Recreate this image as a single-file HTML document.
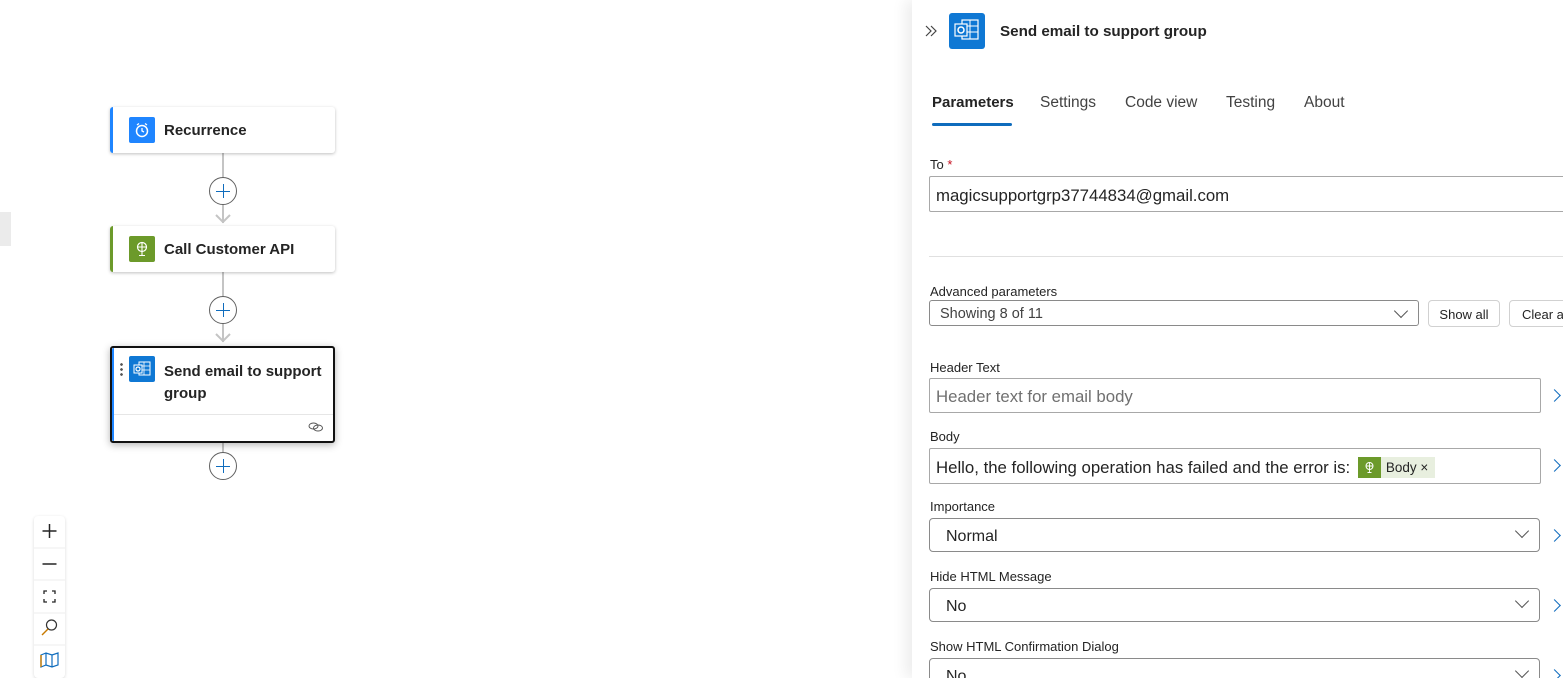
<!DOCTYPE html>
<html><head><style>
*{box-sizing:border-box;margin:0;padding:0}
html,body{width:1563px;height:678px;overflow:hidden}
body{background:#fff;font-family:"Segoe UI","Liberation Sans",sans-serif;color:#242424;position:relative}
.abs{position:absolute}
.card{position:absolute;left:110px;width:225px;background:#fff;border-radius:3px;box-shadow:0 1px 3px rgba(0,0,0,.25);}
.card .bar{position:absolute;left:0;top:0;bottom:0;width:3px;border-radius:3px 0 0 3px}
.ic{position:absolute;width:26px;height:26px;border-radius:2px}
.ct{position:absolute;left:54px;font-size:15px;font-weight:600;color:#242424}
.line{position:absolute;left:222px;width:2px;background:#c4c4c4}
.plus{position:absolute;left:209px;width:28px;height:28px;border:1px solid #616161;border-radius:50%;background:#fff}
.plus:before{content:"";position:absolute;left:6px;top:12.5px;width:14px;height:1.5px;background:#0f6cbd}
.plus:after{content:"";position:absolute;left:12.5px;top:6px;width:1.5px;height:14px;background:#0f6cbd}
.lbl{position:absolute;left:930px;font-size:13px;color:#242424}
.inp{position:absolute;left:929px;border:1px solid #a8a8a8;border-radius:2px;font-size:16.8px;color:#242424;padding-left:6px;padding-top:3px;display:flex;align-items:center;background:#fff}
.sel{position:absolute;left:929px;width:611px;height:34px;border:1px solid #8a8a8a;border-radius:4px;font-size:16px;padding-left:16px;padding-top:3px;display:flex;align-items:center}
.chev{position:absolute;right:12px;width:10px;height:10px;border-right:1.2px solid #555;border-bottom:1.2px solid #555;transform:rotate(45deg);top:7px}
.rch{position:absolute;left:1552px;width:9px;height:9px;border-right:1.6px solid #0f6cbd;border-top:1.6px solid #0f6cbd;transform:rotate(45deg)}
.tab{position:absolute;top:94px;font-size:15.5px;color:#424242}
</style></head><body>
<div class="abs" style="left:0;top:212px;width:11px;height:34px;background:#ebebeb"></div>

<div class="line" style="top:153px;height:70px"></div>
<div class="line" style="top:272px;height:70px"></div>
<div class="line" style="top:443px;height:10px"></div>
<svg class="abs" style="left:215px;top:213px" width="16" height="12"><path d="M1 2 L8 9 L15 2" fill="none" stroke="#c4c4c4" stroke-width="2"/></svg>
<svg class="abs" style="left:215px;top:332px" width="16" height="12"><path d="M1 2 L8 9 L15 2" fill="none" stroke="#c4c4c4" stroke-width="2"/></svg>
<div class="plus" style="top:177px"></div>
<div class="plus" style="top:296px"></div>
<div class="plus" style="top:452px"></div>

<div class="card" style="top:107px;height:46px"><div class="bar" style="background:#1f85ff"></div>
<div class="ic" style="left:19px;top:10px;background:#1f85ff"><svg width="26" height="26"><circle cx="13" cy="14" r="5.5" fill="none" stroke="#fff" stroke-width="1.5"/><path d="M13 11v3l2 1M8 8l2-1.5M18 8l-2-1.5" stroke="#fff" stroke-width="1.3" fill="none"/></svg></div>
<div class="ct" style="top:15px">Recurrence</div></div>

<div class="card" style="top:226px;height:46px"><div class="bar" style="background:#6c9a2a"></div>
<div class="ic" style="left:19px;top:10px;background:#6c9a2a"><svg width="26" height="26"><circle cx="13" cy="11" r="4.5" fill="none" stroke="#fff" stroke-width="1.2"/><path d="M13 6.5v9M8.5 11h9M13 15.5v4M10 19.5h6" stroke="#fff" stroke-width="1.1" fill="none"/></svg></div>
<div class="ct" style="top:15px">Call Customer API</div></div>

<div class="card" style="top:346px;height:97px;border:2px solid #111;box-shadow:0 2px 8px rgba(0,0,0,.3)"><div class="bar" style="background:#1f85ff;width:2px"></div>
<div class="abs" style="left:8px;top:14px;width:3px;height:14px;background:radial-gradient(circle,#555 1.2px,transparent 1.5px) 0 0/3px 5px"></div>
<div class="ic" style="left:17px;top:8px;background:#0f78d4"><svg width="26" height="26"><rect x="10" y="6" width="11" height="13" fill="none" stroke="#fff" stroke-width="1"/><path d="M10 10h11M10 14h11M15 6v13" stroke="#fff" stroke-width=".8"/><rect x="5" y="9" width="8" height="8" fill="#0f78d4" stroke="#fff" stroke-width="1"/><circle cx="9" cy="13" r="2" fill="none" stroke="#fff" stroke-width="1.2"/></svg></div>
<div class="ct" style="top:13px;left:52px;line-height:22px">Send email to support<br>group</div>
<div class="abs" style="left:2px;right:0;top:66px;height:1px;background:#e6e6e6"></div>
<svg class="abs" style="left:196px;top:73px" width="16" height="12"><ellipse cx="5.5" cy="5" rx="4.5" ry="3" fill="none" stroke="#555" stroke-width="1"/><ellipse cx="10" cy="7" rx="4.5" ry="3" fill="none" stroke="#555" stroke-width="1"/></svg>
</div>

<div class="abs" style="left:34px;top:516px;width:31px;height:162px;background:#fff;border-radius:4px;box-shadow:0 1px 3px rgba(0,0,0,.15)">
<svg width="31" height="162"><path d="M15.5 8v14M8.5 15h14" stroke="#242424" stroke-width="1.5"/><line x1="0" y1="32" x2="31" y2="32" stroke="#eee"/><path d="M8.5 48h14" stroke="#242424" stroke-width="1.5"/><line x1="0" y1="64" x2="31" y2="64" stroke="#eee"/><path d="M10 78v-3h3M18 75h3v3M21 83v3h-3M13 86h-3v-3" stroke="#242424" stroke-width="1.3" fill="none"/><line x1="0" y1="97" x2="31" y2="97" stroke="#eee"/><circle cx="17.5" cy="109" r="5" fill="none" stroke="#333" stroke-width="1.2"/><path d="M14 113l-6 6" stroke="#c77a00" stroke-width="1.4"/><line x1="0" y1="129" x2="31" y2="129" stroke="#eee"/><path d="M7 139l5-2 6 2 6-2v12l-6 2-6-2-5 2z M12 137v12M18 139v12" stroke="#0f6cbd" stroke-width="1.2" fill="none"/><path d="M7 139v12" stroke="#c77a00" stroke-width="1.4"/></svg></div>

<div class="abs" style="left:912px;top:0;width:651px;height:678px;background:#fff;box-shadow:-6px 0 14px rgba(0,0,0,.08);overflow:hidden">
<svg class="abs" style="left:12px;top:24px" width="14" height="14"><path d="M2 2l5 5-5 5M7 2l5 5-5 5" stroke="#444" stroke-width="1.2" fill="none"/></svg>
<div class="abs" style="left:37px;top:13px;width:36px;height:36px;background:#0f78d4;border-radius:3px"><svg width="36" height="36"><rect x="13" y="7" width="16" height="19" fill="none" stroke="#fff" stroke-width="1.2"/><path d="M13 13h16M13 19h16M21 7v19" stroke="#fff" stroke-width="1"/><rect x="6" y="11" width="12" height="12" fill="#0f78d4" stroke="#fff" stroke-width="1.2"/><circle cx="12" cy="17" r="3" fill="none" stroke="#fff" stroke-width="1.5"/></svg></div>
<div class="abs" style="left:88px;top:23px;font-size:15.2px;font-weight:600">Send email to support group</div>
</div>

<div class="tab" style="left:932px;font-weight:600;color:#242424;font-size:15px">Parameters</div>
<div class="tab" style="left:1040px">Settings</div>
<div class="tab" style="left:1125px">Code view</div>
<div class="tab" style="left:1226px">Testing</div>
<div class="tab" style="left:1304px">About</div>
<div class="abs" style="left:932px;top:123px;width:80px;height:3px;background:#0f6cbd;border-radius:2px"></div>

<div class="lbl" style="top:157px">To <span style="color:#c50f1f">*</span></div>
<div class="inp" style="top:176px;width:640px;height:36px">magicsupportgrp37744834@gmail.com</div>
<div class="abs" style="left:929px;top:256px;width:634px;height:1px;background:#e0e0e0"></div>

<div class="lbl" style="top:284px">Advanced parameters</div>
<div class="inp" style="top:300px;width:490px;height:26px;font-size:14.5px;padding-left:10px;padding-top:1px;color:#424242;border-color:#8a8a8a;border-radius:3px">Showing 8 of 11<div class="chev" style="top:5px"></div></div>
<div class="abs" style="left:1428px;top:300px;width:72px;height:27px;border:1px solid #d1d1d1;border-radius:4px;font-size:13px;padding-top:2px;display:flex;align-items:center;justify-content:center">Show all</div>
<div class="abs" style="left:1509px;top:300px;width:72px;height:27px;border:1px solid #d1d1d1;border-radius:4px;font-size:13px;padding-left:12px;padding-top:2px;display:flex;align-items:center">Clear all</div>

<div class="lbl" style="top:360px">Header Text</div>
<div class="inp" style="top:378px;width:612px;height:35px;color:#707070">Header text for email body</div>
<div class="rch" style="top:391px;left:1550px"></div>

<div class="lbl" style="top:429px">Body</div>
<div class="inp" style="top:448px;width:612px;height:36px">Hello, the following operation has failed and the error is:&nbsp;
<span style="display:inline-flex;align-items:center;height:21px;background:#e8efdf;font-size:13.5px;padding-right:7px;margin-left:3px"><span style="width:23px;height:21px;background:#6c9a2a;display:inline-block;margin-right:5px;position:relative"><svg width="23" height="21"><circle cx="11.5" cy="9" r="3.5" fill="none" stroke="#fff" stroke-width="1"/><path d="M11.5 5.5v7M8 9h7M11.5 12.5v3M9.5 15.5h4" stroke="#fff" stroke-width=".9"/></svg></span>Body ×</span></div>
<div class="rch" style="top:461px;left:1550px"></div>

<div class="lbl" style="top:499px">Importance</div>
<div class="sel" style="top:518px">Normal<div class="chev"></div></div>
<div class="rch" style="top:531px;left:1550px"></div>

<div class="lbl" style="top:569px">Hide HTML Message</div>
<div class="sel" style="top:588px">No<div class="chev"></div></div>
<div class="rch" style="top:601px;left:1550px"></div>

<div class="lbl" style="top:639px">Show HTML Confirmation Dialog</div>
<div class="sel" style="top:658px">No<div class="chev"></div></div>
<div class="rch" style="top:671px;left:1550px"></div>
</body></html>
